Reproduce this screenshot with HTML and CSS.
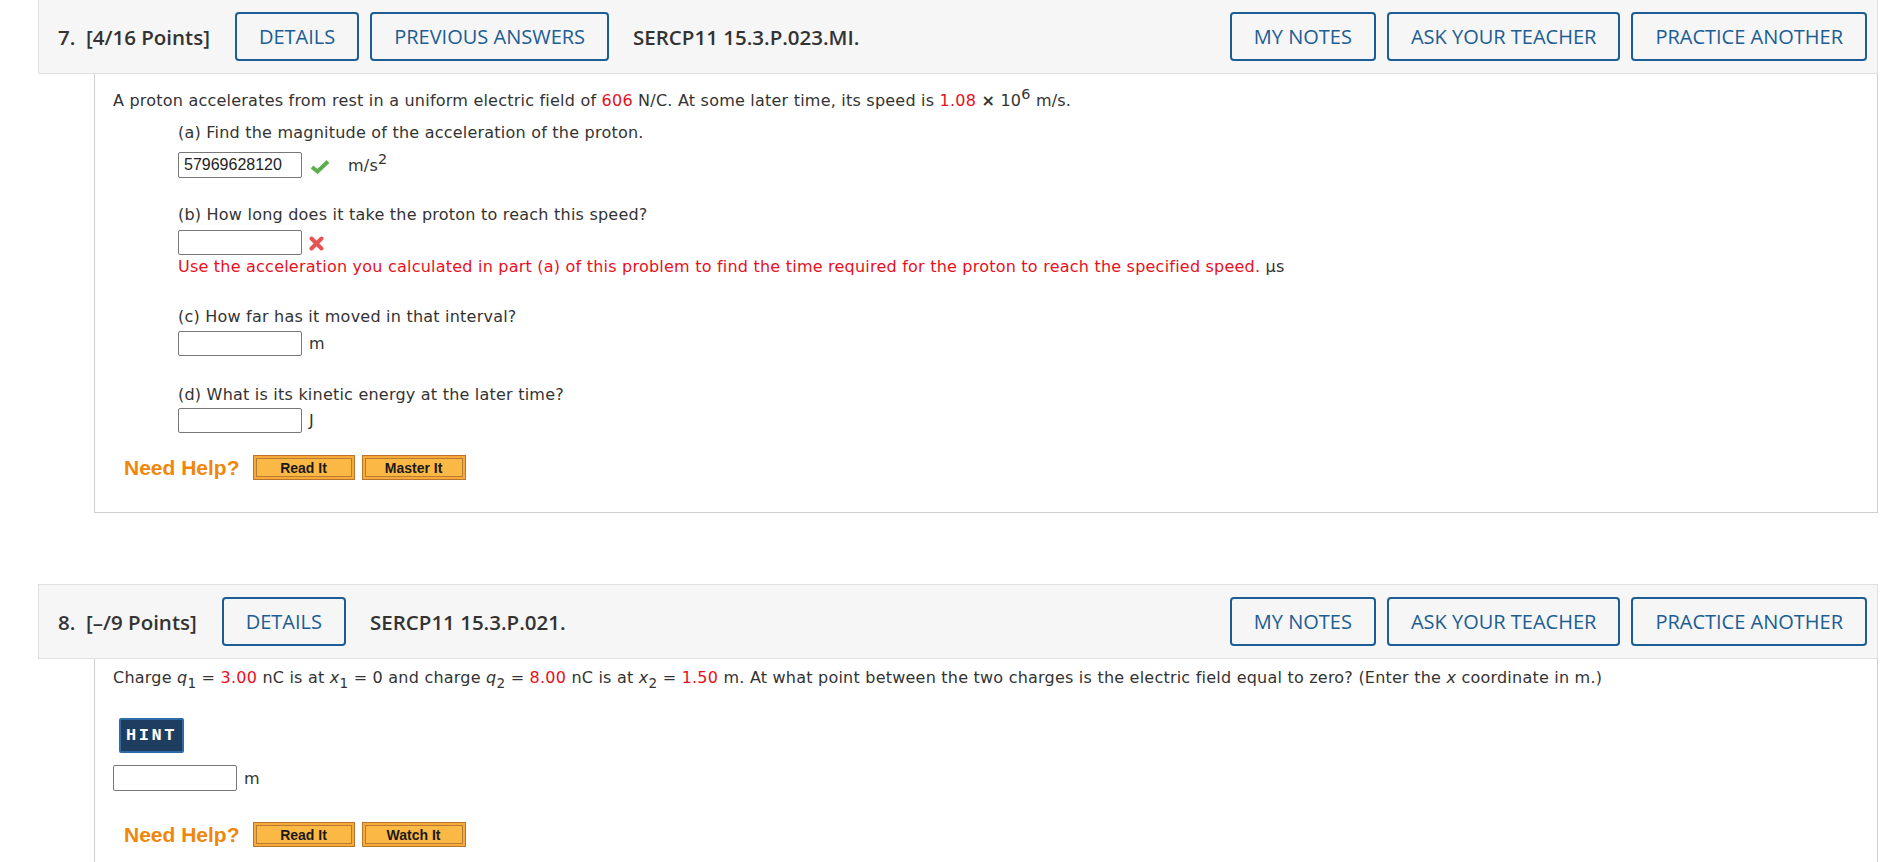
FILE: index.html
```html
<!DOCTYPE html>
<html>
<head>
<meta charset="utf-8">
<link rel="stylesheet" href="styles.css">
</head>
<body>
<div class="page">
  <div class="question first">
    <div class="q-head">
      <span class="q-label">7.&nbsp; [4/16 Points]</span>
      <button class="hbtn">DETAILS</button>
      <button class="hbtn">PREVIOUS ANSWERS</button>
      <span class="q-code">SERCP11 15.3.P.023.MI.</span>
      <span class="spacer"></span>
      <button class="hbtn">MY NOTES</button>
      <button class="hbtn">ASK YOUR TEACHER</button>
      <button class="hbtn">PRACTICE ANOTHER</button>
    </div>
    <div class="q-body q7">
      <p class="line intro">A proton accelerates from rest in a uniform electric field of <span class="red">606</span> N/C. At some later time, its speed is <span class="red">1.08</span> <b class="times">×</b> 10<sup>6</sup> m/s.</p>
      <div class="part">
        <p class="line pa-q">(a) Find the magnitude of the acceleration of the proton.</p>
        <div class="arow ra">
          <span class="ans">57969628120</span>
          <svg class="check" width="20" height="15" viewBox="0 0 20 15"><path d="M2 8 L7.5 12.5 L18 2.5" fill="none" stroke="#5fae4e" stroke-width="4" stroke-linejoin="miter"/></svg>
          <span class="unit u-ms">m/s<sup>2</sup></span>
        </div>
        <p class="line pb-q">(b) How long does it take the proton to reach this speed?</p>
        <div class="arow rb">
          <span class="ans"></span>
          <svg class="xmark" width="15" height="15" viewBox="0 0 15 15"><path d="M2.5 2.5 L12.5 12.5 M12.5 2.5 L2.5 12.5" stroke="#e55454" stroke-width="4" stroke-linecap="round"/></svg>
        </div>
        <p class="line feedback"><span class="red">Use the acceleration you calculated in part (a) of this problem to find the time required for the proton to reach the specified speed.</span> μs</p>
        <p class="line pc-q">(c) How far has it moved in that interval?</p>
        <div class="arow rc">
          <span class="ans"></span>
          <span class="unit">m</span>
        </div>
        <p class="line pd-q">(d) What is its kinetic energy at the later time?</p>
        <div class="arow rd">
          <span class="ans"></span>
          <span class="unit">J</span>
        </div>
      </div>
      <div class="help h7">
        <span class="need">Need Help?</span>
        <button class="hb">Read It</button>
        <button class="hb wide">Master It</button>
      </div>
    </div>
  </div>

  <div class="question second">
    <div class="q-head">
      <span class="q-label">8.&nbsp; [–/9 Points]</span>
      <button class="hbtn">DETAILS</button>
      <span class="q-code">SERCP11 15.3.P.021.</span>
      <span class="spacer"></span>
      <button class="hbtn">MY NOTES</button>
      <button class="hbtn">ASK YOUR TEACHER</button>
      <button class="hbtn">PRACTICE ANOTHER</button>
    </div>
    <div class="q-body q8">
      <p class="line charge">Charge <i>q</i><sub>1</sub> = <span class="red">3.00</span> nC is at <i>x</i><sub>1</sub> = 0 and charge <i>q</i><sub>2</sub> = <span class="red">8.00</span> nC is at <i>x</i><sub>2</sub> = <span class="red">1.50</span> m. At what point between the two charges is the electric field equal to zero? (Enter the <i>x</i> coordinate in m.)</p>
      <button class="hint">HINT</button>
      <div class="arow r8">
        <span class="ans"></span>
        <span class="unit">m</span>
      </div>
      <div class="help h8">
        <span class="need">Need Help?</span>
        <button class="hb">Read It</button>
        <button class="hb wide">Watch It</button>
      </div>
    </div>
  </div>
</div>
</body>
</html>
```

FILE: styles.css
```css
body {
  margin: 0;
  background: #fff;
  color: #333;
  font-family: "DejaVu Sans", sans-serif;
}
.page {
  padding: 0 10px 0 38px;
}
.question.second {
  margin-top: 71px;
}
.q-head {
  display: flex;
  align-items: center;
  height: 73px;
  background: #f6f6f6;
  border: 1px solid #e0e0e0;
  padding: 0 10px 0 19px;
}
.question.first .q-head {
  border-top: 0;
}
.q-label,
.q-code {
  font-family: "Open Sans", sans-serif;
  font-weight: 600;
  font-size: 20.5px;
  color: #333;
  white-space: nowrap;
}
.q-label {
  margin-right: 25px;
}
.q-code {
  margin-left: 13px;
}
.spacer {
  flex: 1;
}
.hbtn {
  height: 49px;
  padding: 0 22px;
  margin-right: 11px;
  border: 2px solid #1c5d93;
  border-radius: 4px;
  background: transparent;
  color: #1c5d93;
  font-family: "Open Sans", sans-serif;
  font-size: 20px;
  font-weight: 400;
  white-space: nowrap;
}
.hbtn:last-child {
  margin-right: 0;
}
.q-body {
  margin-left: 56px;
  border: 1px solid #cfcfcf;
  border-top: 0;
  padding: 17px 18px 32px 18px;
  font-size: 16px;
  letter-spacing: 0.22px;
}
.q-body.q8 {
  border-bottom: 0;
  padding-top: 9px;
  padding-bottom: 40px;
}
.line {
  margin: 0;
  line-height: 20px;
  white-space: nowrap;
}
.red {
  color: #e8101c;
}
sup {
  font-size: 0.9em;
  line-height: 0;
  vertical-align: 0.5em;
}
sub {
  font-size: 0.85em;
  line-height: 0;
  vertical-align: -0.35em;
}
.times {
  font-weight: bold;
}
.part {
  margin-left: 65px;
}
.pa-q { margin-top: 12px; }
.ra { margin-top: 9px; height: 26px; }
.pb-q { margin-top: 27px; }
.rb { margin-top: 5px; height: 25px; }
.feedback { margin-top: 2px; }
.pc-q { margin-top: 30px; }
.rc { margin-top: 4px; height: 25px; }
.pd-q { margin-top: 29px; }
.rd { margin-top: 3px; height: 25px; }
.arow {
  display: flex;
  align-items: center;
}
.ans {
  box-sizing: border-box;
  width: 124px;
  height: 100%;
  border: 1px solid #777;
  border-radius: 2px;
  padding: 0 5px;
  display: flex;
  align-items: center;
  font-family: "Liberation Sans", Arial, sans-serif;
  font-size: 16px;
  letter-spacing: 0;
  color: #222;
}
.check {
  margin-left: 8px;
  margin-top: 3px;
}
.xmark {
  margin-left: 7px;
  margin-top: 2px;
}
.unit {
  margin-left: 7px;
}
.u-ms {
  margin-left: 18px;
}
.help {
  display: flex;
  align-items: center;
  margin-left: 11px;
  height: 25px;
  letter-spacing: 0;
}
.h7 { margin-top: 22px; }
.h8 { margin-top: 31px; }
.need {
  font-family: "Liberation Sans", Arial, sans-serif;
  font-weight: bold;
  font-size: 21px;
  color: #f0870a;
  margin-right: 13px;
}
.hb {
  box-sizing: border-box;
  width: 102px;
  height: 25px;
  margin-right: 7px;
  padding: 0;
  border: 1px solid #b8752c;
  background: #fcb844;
  box-shadow: inset 0 0 0 2px #f7a93a, inset 0 0 0 3px #b97a32;
  font-family: "Liberation Sans", Arial, sans-serif;
  font-weight: bold;
  font-size: 14px;
  color: #1a1a1a;
}
.hb.wide {
  width: 104px;
}
.hint {
  display: block;
  margin-top: 30px;
  margin-left: 6px;
  width: 65px;
  height: 35px;
  padding: 0;
  background: #1f3d5e;
  border: 2px solid #2f6aa8;
  border-radius: 2px;
  color: #fff;
  font-family: "Liberation Mono", monospace;
  font-weight: bold;
  font-size: 17px;
  letter-spacing: 2.5px;
}
.r8 {
  margin-top: 12px;
  height: 26px;
}
```
